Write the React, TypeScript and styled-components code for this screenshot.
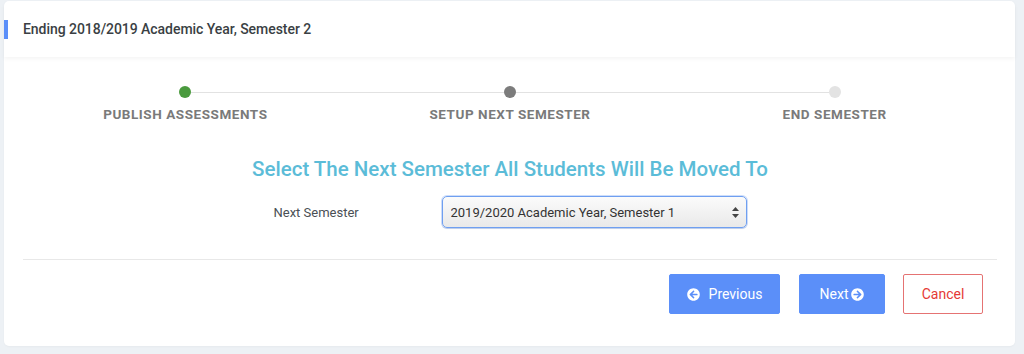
import { createGlobalStyle } from "styled-components"
import styled from "styled-components"
import { FaArrowCircleLeft, FaArrowCircleRight } from "react-icons/fa"

const GlobalStyle = createGlobalStyle`
	html, body {
		margin: 0;
		padding: 0;
		background: #edf1f5;
		font-family: Roboto, "Liberation Sans", Arial, sans-serif;
	}
	* { box-sizing: border-box; }
`

const steps = [
	{ label: "Publish Assessments", state: "done" },
	{ label: "Setup Next Semester", state: "current" },
	{ label: "End Semester", state: "todo" },
]

export default function App() {
	return (
		<Page>
			<GlobalStyle />
			<Card>
				<Header>
					<Accent />
					<Title>Ending 2018/2019 Academic Year, Semester 2</Title>
				</Header>

				<Body>
					<Stepper>
						{steps.map((step, i) => (
							<Step key={step.label}>
								<DotRow>
									<Segment visible={i > 0} />
									<Dot state={step.state} />
									<Segment visible={i < steps.length - 1} />
								</DotRow>
								<StepLabel>{step.label}</StepLabel>
							</Step>
						))}
					</Stepper>

					<Heading>Select The Next Semester All Students Will Be Moved To</Heading>

					<FormRow>
						<FieldLabel>Next Semester</FieldLabel>
						<SelectWrap>
							<Select defaultValue="s1">
								<option value="s1">2019/2020 Academic Year, Semester 1</option>
								<option value="s2">2019/2020 Academic Year, Semester 2</option>
							</Select>
							<Arrows>
								<svg width="7" height="11" viewBox="0 0 7 11">
									<path d="M3.5 0 L7 4 L0 4 Z" fill="#444" />
									<path d="M3.5 11 L7 7 L0 7 Z" fill="#444" />
								</svg>
							</Arrows>
						</SelectWrap>
					</FormRow>

					<Divider />

					<Actions>
						<Button variant="primary" width={111}>
							<FaArrowCircleLeft size={13} />
							<span>Previous</span>
						</Button>
						<Button variant="primary" width={86}>
							<span>Next</span>
							<FaArrowCircleRight size={13} />
						</Button>
						<Button variant="danger" width={80}>
							<span>Cancel</span>
						</Button>
					</Actions>
				</Body>
			</Card>
		</Page>
	)
}

const Page = styled.div`
	padding: 1px 9px 8px 4px;
	height: 354px;
`

const Card = styled.div`
	background: #fff;
	border-radius: 5px;
	height: 345px;
	box-shadow: 0 1px 2px rgba(0, 0, 0, 0.03);
	display: flex;
	flex-direction: column;
`

const Header = styled.div`
	height: 56px;
	display: flex;
	align-items: center;
	gap: 15px;
	border-radius: 5px 5px 0 0;
	box-shadow: 0 2px 4px rgba(0, 0, 0, 0.045);
`

const Accent = styled.div`
	width: 4px;
	height: 19px;
	background: #5b8ff9;
`

const Title = styled.div`
	font-size: 14px;
	font-weight: 500;
	color: #3a3f44;
	letter-spacing: -0.05px;
	padding-bottom: 1px;
`

const Body = styled.div`
	padding: 0 18px 0 19px;
	display: flex;
	flex-direction: column;
`

const Stepper = styled.div`
	display: grid;
	grid-template-columns: repeat(3, 1fr);
	margin-top: 29px;
`

const Step = styled.div`
	display: flex;
	flex-direction: column;
	align-items: center;
`

const DotRow = styled.div`
	width: 100%;
	display: flex;
	align-items: center;
	height: 12px;
`

const Segment = styled.div<{ visible: boolean }>`
	flex: 1;
	height: 1px;
	background: ${(p) => (p.visible ? "#e2e2e2" : "transparent")};
`

const Dot = styled.div<{ state: string }>`
	width: 12px;
	height: 12px;
	border-radius: 50%;
	background: ${(p) =>
		p.state == "done" ? "#4a9a3e" : p.state == "current" ? "#7c7c7c" : "#e3e3e3"};
`

const StepLabel = styled.div`
	margin-top: 8px;
	font-size: 13.5px;
	line-height: 16px;
	font-weight: 700;
	text-transform: uppercase;
	letter-spacing: 0.55px;
	color: #7a7a7a;
`

const Heading = styled.h2`
	margin: 35px 0 0;
	text-align: center;
	font-size: 20.5px;
	line-height: 24px;
	font-weight: 500;
	color: #5bbcd8;
`

const FormRow = styled.div`
	display: flex;
	justify-content: center;
	align-items: center;
	margin-top: 15px;
`

const FieldLabel = styled.label`
	width: 168px;
	font-size: 13px;
	color: #4a4f55;
`

const SelectWrap = styled.div`
	position: relative;
	width: 305px;
	height: 32px;
`

const Select = styled.select`
	appearance: none;
	width: 100%;
	height: 100%;
	padding: 0 24px 0 8px;
	font-family: Roboto, "Liberation Sans", Arial, sans-serif;
	font-size: 13px;
	color: #333;
	border: 1px solid #6f9ff0;
	border-radius: 5px;
	background: linear-gradient(#fbfbfb, #e9e9e9);
	box-shadow: 0 0 0 1px rgba(111, 159, 240, 0.35), 0 1px 1px rgba(0, 0, 0, 0.1);
	outline: none;
`

const Arrows = styled.span`
	position: absolute;
	right: 8px;
	top: 11px;
	display: flex;
	pointer-events: none;
`

const Divider = styled.hr`
	margin: 31px 0 0;
	border: none;
	border-top: 1px solid #e8e8e8;
	height: 0;
`

const Actions = styled.div`
	display: flex;
	justify-content: flex-end;
	gap: 18px;
	margin-top: 14px;
	padding-right: 14px;
`

const Button = styled.button<{ variant: "primary" | "danger"; width: number }>`
	width: ${(p) => p.width}px;
	height: 40px;
	display: inline-flex;
	align-items: center;
	justify-content: center;
	gap: ${(p) => (p.variant == "primary" && p.width > 100 ? "9px" : "3px")};
	font-family: Roboto, "Liberation Sans", Arial, sans-serif;
	font-size: 14px;
	border-radius: 2px;
	cursor: pointer;
	background: ${(p) => (p.variant == "primary" ? "#5b8ff9" : "#fff")};
	color: ${(p) => (p.variant == "primary" ? "#fff" : "#e53935")};
	border: 1px solid ${(p) => (p.variant == "primary" ? "#5b8ff9" : "#e57373")};

	&:nth-child(2) {
		margin-left: 1px;
	}
`
